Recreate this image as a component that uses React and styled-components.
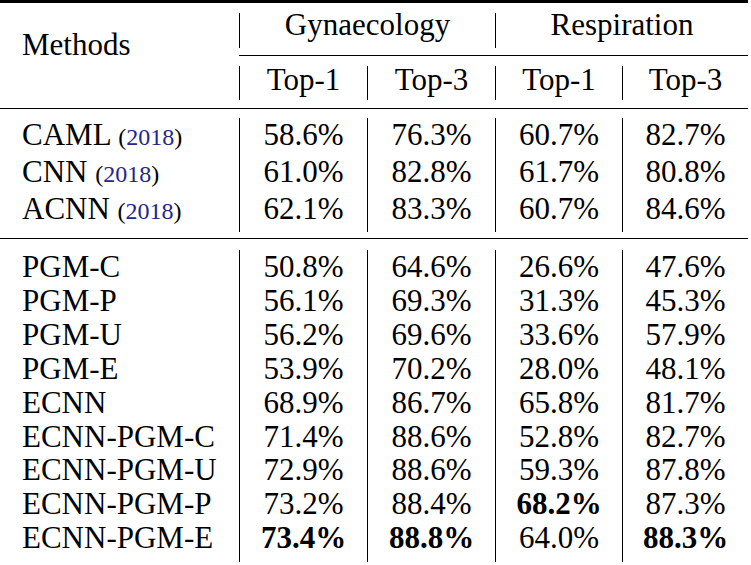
import React from 'react';
import styled, { createGlobalStyle } from 'styled-components';

const GlobalStyle = createGlobalStyle`
  html, body {
    margin: 0;
    padding: 0;
    background: #fff;
  }
  body {
    font-family: "Liberation Serif", "Times New Roman", serif;
    color: #000;
  }
`;

const COLS = '239px 128px 128px 127px 126px';

const rows = [
  {
    group: 'baselines',
    items: [
      { name: 'CAML', cite: '2018', values: ['58.6', '76.3', '60.7', '82.7'] },
      { name: 'CNN', cite: '2018', values: ['61.0', '82.8', '61.7', '80.8'] },
      { name: 'ACNN', cite: '2018', values: ['62.1', '83.3', '60.7', '84.6'] },
    ],
  },
  {
    group: 'ours',
    items: [
      { name: 'PGM-C', values: ['50.8', '64.6', '26.6', '47.6'] },
      { name: 'PGM-P', values: ['56.1', '69.3', '31.3', '45.3'] },
      { name: 'PGM-U', values: ['56.2', '69.6', '33.6', '57.9'] },
      { name: 'PGM-E', values: ['53.9', '70.2', '28.0', '48.1'] },
      { name: 'ECNN', values: ['68.9', '86.7', '65.8', '81.7'] },
      { name: 'ECNN-PGM-C', values: ['71.4', '88.6', '52.8', '82.7'] },
      { name: 'ECNN-PGM-U', values: ['72.9', '88.6', '59.3', '87.8'] },
      { name: 'ECNN-PGM-P', values: ['73.2', '88.4', '68.2', '87.3'], bold: [2] },
      { name: 'ECNN-PGM-E', values: ['73.4', '88.8', '64.0', '88.3'], bold: [0, 1, 3] },
    ],
  },
];

const Table = styled.div`
  width: 748px;
  font-size: 31px;
`;

const Rule = styled.div`
  height: ${(p) => p.$thick}px;
  background: #000;
`;

const Header = styled.div`
  display: grid;
  grid-template-columns: ${COLS};
  grid-template-rows: 52px 1px 52px;
`;

const MethodsHead = styled.div`
  grid-column: 1;
  grid-row: 1 / 4;
  padding: 24.5px 0 0 22px;
  line-height: 34px;
`;

const HeadCell = styled.div`
  grid-column: ${(p) => p.$col};
  grid-row: ${(p) => p.$row};
  padding-top: 10px;
`;

const HeadLabel = styled.div`
  height: ${(p) => p.$h}px;
  line-height: ${(p) => p.$lh}px;
  border-left: 1px solid #000;
  text-align: center;
  white-space: nowrap;
`;

const CMidRule = styled.div`
  grid-column: 2 / 6;
  grid-row: 2;
  background: #000;
`;

/* last row of a group keeps a little extra room so the column rules run past the text */
const Group = styled.div`
  display: grid;
  grid-template-columns: ${COLS};
  padding: ${(p) => p.$top}px 0 ${(p) => p.$bottom}px;
  line-height: 33.9px;

  & > :nth-last-child(-n + 5) {
    padding-bottom: ${(p) => p.$tail}px;
  }
`;

const Method = styled.div`
  padding-left: 22px;
  white-space: nowrap;
`;

const Cite = styled.span`
  font-size: 24px;
`;

const CiteYear = styled.span`
  color: #25258c;
`;

const Value = styled.div`
  border-left: 1px solid #000;
  text-align: center;
  font-weight: ${(p) => (p.$bold ? 700 : 400)};
  white-space: nowrap;
`;

function Row({ item }) {
  return (
    <>
      <Method>
        {item.name}
        {item.cite && (
          <>
            {' '}
            <Cite>
              (<CiteYear>{item.cite}</CiteYear>)
            </Cite>
          </>
        )}
      </Method>
      {item.values.map((v, i) => (
        <Value key={i} $bold={item.bold && item.bold.includes(i)}>
          {v}%
        </Value>
      ))}
    </>
  );
}

export default function App() {
  return (
    <>
      <GlobalStyle />
      <Table>
        <Rule $thick={3} />
        <Header>
          <MethodsHead>Methods</MethodsHead>
          <HeadCell $col="2 / 4" $row={1}>
            <HeadLabel $h={35} $lh={24}>Gynaecology</HeadLabel>
          </HeadCell>
          <HeadCell $col="4 / 6" $row={1}>
            <HeadLabel $h={35} $lh={24}>Respiration</HeadLabel>
          </HeadCell>
          <CMidRule />
          {['Top-1', 'Top-3', 'Top-1', 'Top-3'].map((t, i) => (
            <HeadCell key={i} $col={i + 2} $row={3}>
              <HeadLabel $h={34} $lh={28.5}>{t}</HeadLabel>
            </HeadCell>
          ))}
        </Header>
        <Rule $thick={1} />
        <Group $top={9} $bottom={6} $tail={3.3}>
          {rows[0].items.map((it) => (
            <Row key={it.name} item={it} />
          ))}
        </Group>
        <Rule $thick={1} />
        <Group $top={11} $bottom={6} $tail={6.9}>
          {rows[1].items.map((it) => (
            <Row key={it.name} item={it} />
          ))}
        </Group>
        <Rule $thick={3} />
      </Table>
    </>
  );
}
